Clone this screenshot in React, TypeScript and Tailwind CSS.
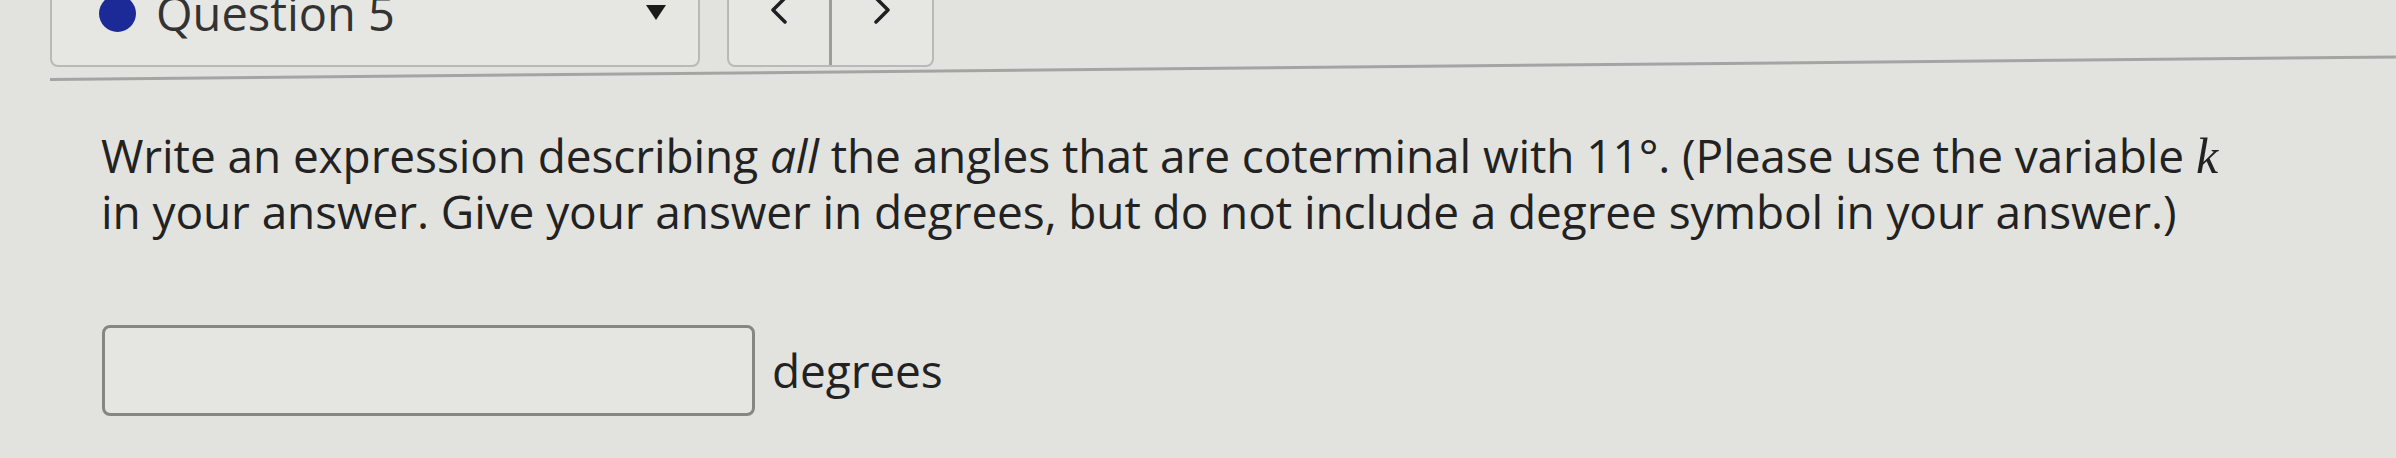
import React from 'react';

export default function App() {
  return (
    <div className="w-[2396px] h-[458px] overflow-hidden bg-[#e2e3df] text-[#222] font-['Open_Sans',sans-serif]">
      {/* Top bar: question picker and prev/next */}
      <div className="flex items-end -mt-[35px] h-[102px]">
        <div className="ml-[50px] w-[650px] h-full rounded-lg border-2 border-[#b9bab6] bg-[#e6e7e3] flex items-start pt-[20px] pl-[47px] pr-[32px]">
          <span className="w-[37px] h-[37px] rounded-full bg-[#1c2a98] mt-[8px]"></span>
          <span className="ml-[20px] text-[47px] leading-[52px] text-[#333]">Question 5</span>
          <span className="ml-auto mt-[18px] w-0 h-0 border-l-[10px] border-r-[10px] border-t-[15px] border-l-transparent border-r-transparent border-t-[#1a1a1a]"></span>
        </div>
        <div className="ml-[27px] w-[207px] h-[99px] rounded-lg border-2 border-[#b9bab6] bg-[#e6e7e3] flex">
          <div className="w-[103px] border-r-[3px] border-[#9c9d99] flex justify-center pt-[26px]">
            <svg width="20" height="28" viewBox="0 0 20 28" fill="none" stroke="#1f1f1f" strokeWidth="3.5" strokeLinecap="round" strokeLinejoin="round">
              <path d="M16 2 L4 14 L16 26" />
            </svg>
          </div>
          <div className="flex-1 flex justify-center pt-[26px]">
            <svg width="20" height="28" viewBox="0 0 20 28" fill="none" stroke="#1f1f1f" strokeWidth="3.5" strokeLinecap="round" strokeLinejoin="round">
              <path d="M4 2 L16 14 L4 26" />
            </svg>
          </div>
        </div>
      </div>

      <div className="ml-[50px] mt-[11px] h-[3px] bg-[#a4a5a2] origin-left -rotate-[0.55deg]"></div>

      {/* Question body */}
      <div className="pl-[101px] pt-[46px] text-[46px] leading-[56px] font-medium tracking-[-0.1px]">
        <p>
          Write an expression describing <i>all</i> the angles that are coterminal with 11°. (Please use the variable{' '}
          <i className="font-['Liberation_Serif',serif] text-[50px] leading-[50px] font-normal">k</i>
        </p>
        <p>in your answer. Give your answer in degrees, but do not include a degree symbol in your answer.)</p>
      </div>

      <div className="flex items-center pl-[102px] mt-[86px]">
        <div className="w-[653px] h-[91px] rounded-lg border-[3px] border-[#868783] bg-[#e5e6e2]"></div>
        <span className="ml-[17px] text-[46px] font-medium tracking-[-0.1px]">degrees</span>
      </div>
    </div>
  );
}
